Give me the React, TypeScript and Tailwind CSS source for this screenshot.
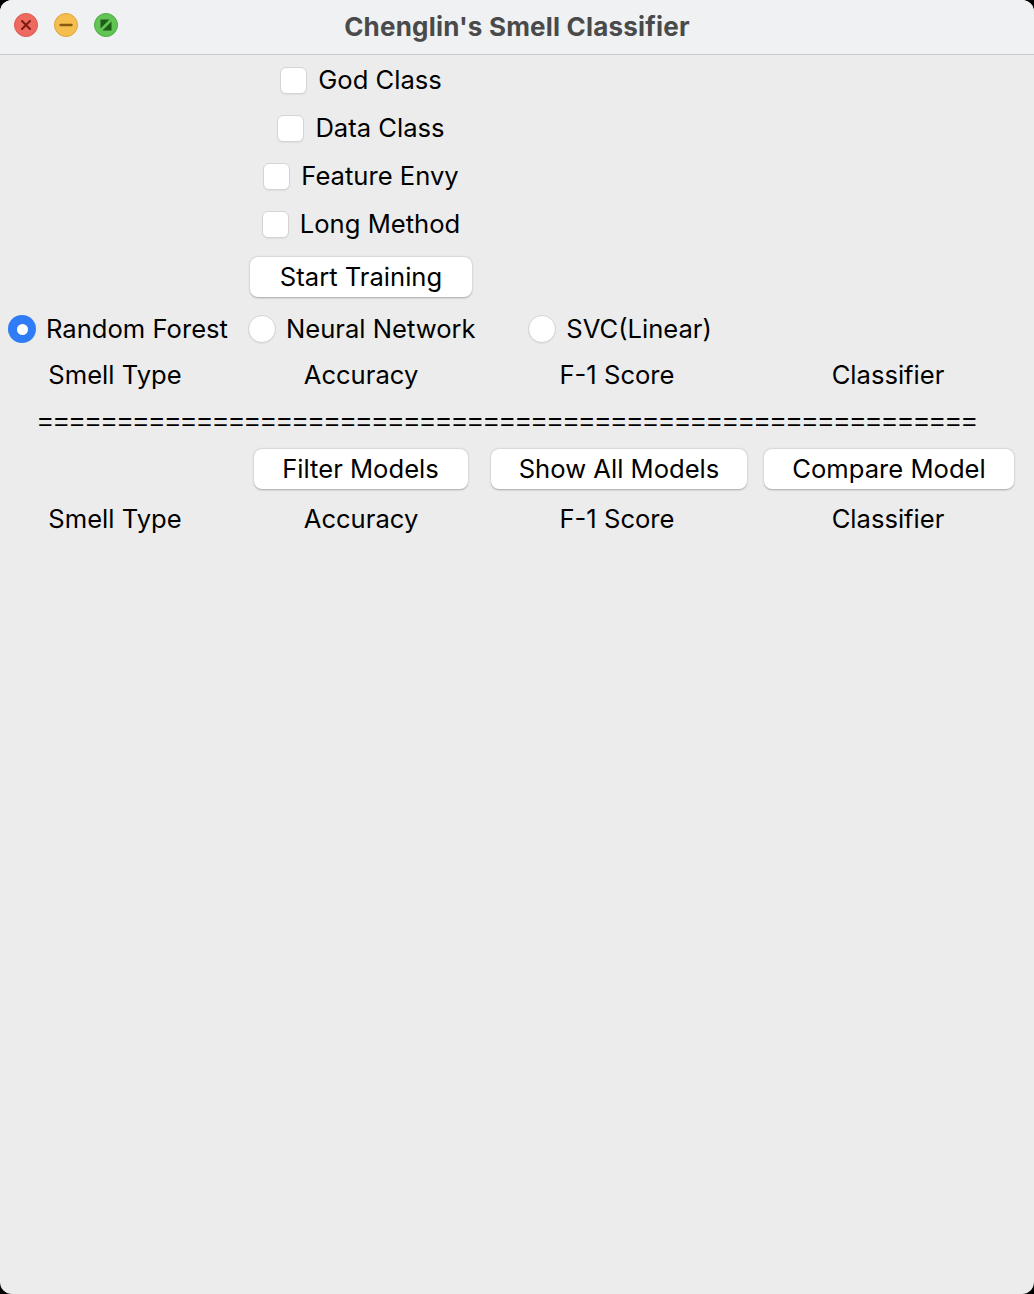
import { useState } from 'react'

const font = { fontFamily: 'Inter, "Liberation Sans", sans-serif' }

function Checkbox({ label }: { label: string }) {
    const [checked, setChecked] = useState(false)
    return (
        <label className="flex items-center gap-[11px] cursor-default select-none">
            <span
                onClick={() => setChecked(!checked)}
                className={`w-[27px] h-[27px] rounded-[6px] border border-[#d4d4d4] shadow-[0_1px_1px_rgba(0,0,0,0.06)] ${checked ? 'bg-[#2f7cf6]' : 'bg-white'}`}
            />
            <span className="text-[25.6px] text-black leading-none">{label}</span>
        </label>
    )
}

function Radio({ label, selected, onSelect }: { label: string; selected: boolean; onSelect: () => void }) {
    return (
        <div className="flex items-center gap-[10px] cursor-default select-none" onClick={onSelect}>
            {selected ? (
                <span className="w-[28px] h-[28px] rounded-full bg-[#2f7cf6] flex items-center justify-center">
                    <span className="w-[11px] h-[11px] rounded-full bg-white" />
                </span>
            ) : (
                <span className="w-[28px] h-[28px] rounded-full bg-white border border-[#d4d4d4] shadow-[0_1px_1px_rgba(0,0,0,0.06)]" />
            )}
            <span className="text-[25.6px] text-black leading-none">{label}</span>
        </div>
    )
}

function Button({ label, width }: { label: string; width: string }) {
    return (
        <button
            className={`${width} h-[40px] rounded-[8px] bg-white text-[25.6px] text-black leading-none shadow-[0_0.5px_2px_rgba(0,0,0,0.3)]`}
        >
            {label}
        </button>
    )
}

function HeaderRow() {
    return (
        <>
            <div className="justify-self-center text-[25.6px] leading-none -ml-[6px]">Smell Type</div>
            <div className="justify-self-center text-[25.6px] leading-none">Accuracy</div>
            <div className="justify-self-center text-[25.6px] leading-none">F-1 Score</div>
            <div className="justify-self-center text-[25.6px] leading-none">Classifier</div>
        </>
    )
}

export default function App() {
    const [model, setModel] = useState('rf')

    return (
        <div className="w-[1034px] h-[1294px] bg-black" style={font}>
            <div className="w-full h-full rounded-[12px] overflow-hidden bg-[#ececec] flex flex-col">
                {/* title bar */}
                <div className="h-[55px] shrink-0 bg-[#eff1f3] border-b border-[#cbcbcb] relative flex items-center justify-center">
                    <div className="absolute left-[14px] top-[13px] flex gap-[16px]">
                        <span className="w-[24px] h-[24px] rounded-full bg-[#ee6a5f] border border-[#d95a4f] flex items-center justify-center">
                            <svg width="12" height="12" viewBox="0 0 12 12">
                                <path d="M2 2 L10 10 M10 2 L2 10" stroke="#7d1a12" strokeWidth="2" strokeLinecap="round" />
                            </svg>
                        </span>
                        <span className="w-[24px] h-[24px] rounded-full bg-[#f5bf4f] border border-[#dca43c] flex items-center justify-center">
                            <svg width="14" height="12" viewBox="0 0 14 12">
                                <path d="M1.5 6 L12.5 6" stroke="#8a5a10" strokeWidth="2.4" strokeLinecap="round" />
                            </svg>
                        </span>
                        <span className="w-[24px] h-[24px] rounded-full bg-[#61c454] border border-[#4eaa41] flex items-center justify-center">
                            <svg width="12" height="12" viewBox="0 0 12 12">
                                <path d="M0.5 0.5 L9.5 0.5 L0.5 9.5 Z" fill="#1f5c17" />
                                <path d="M11.5 11.5 L2.5 11.5 L11.5 2.5 Z" fill="#1f5c17" />
                            </svg>
                        </span>
                    </div>
                    <span className="text-[26px] font-bold text-[#4a4a4a] tracking-[0.2px] -mt-[1px]">Chenglin's Smell Classifier</span>
                </div>

                {/* body */}
                <div className="grid grid-cols-[236px_250px_262px_280px] pt-[1px] text-black items-center">
                    <div className="h-[48px]" />
                    <div className="h-[48px] justify-self-center flex items-center"><Checkbox label="God Class" /></div>
                    <div />
                    <div />

                    <div className="h-[48px]" />
                    <div className="h-[48px] justify-self-center flex items-center"><Checkbox label="Data Class" /></div>
                    <div />
                    <div />

                    <div className="h-[48px]" />
                    <div className="h-[48px] justify-self-center flex items-center"><Checkbox label="Feature Envy" /></div>
                    <div />
                    <div />

                    <div className="h-[48px]" />
                    <div className="h-[48px] justify-self-center flex items-center"><Checkbox label="Long Method" /></div>
                    <div />
                    <div />

                    <div className="h-[58px]" />
                    <div className="justify-self-center"><Button label="Start Training" width="w-[222px]" /></div>
                    <div />
                    <div />

                    <div className="h-[46px] flex items-center pl-[8px]">
                        <Radio label="Random Forest" selected={model === 'rf'} onSelect={() => setModel('rf')} />
                    </div>
                    <div className="flex items-center pl-[12px]">
                        <Radio label="Neural Network" selected={model === 'nn'} onSelect={() => setModel('nn')} />
                    </div>
                    <div className="justify-self-center ml-[6px]">
                        <Radio label="SVC(Linear)" selected={model === 'svc'} onSelect={() => setModel('svc')} />
                    </div>
                    <div />

                    <div className="h-[46px] col-span-4 grid grid-cols-subgrid items-center">
                        <HeaderRow />
                    </div>

                    <div
                        className="h-[46px] col-span-4 flex items-center pl-[38px] text-[25px] leading-none tracking-[1.33px] whitespace-nowrap"
                        style={{ fontFamily: '"Liberation Sans", Arial, sans-serif' }}
                    >
                        {'='.repeat(59)}
                    </div>

                    <div className="h-[50px]" />
                    <div className="justify-self-center ml-[-1px]"><Button label="Filter Models" width="w-[214px]" /></div>
                    <div className="justify-self-center ml-[4px]"><Button label="Show All Models" width="w-[256px]" /></div>
                    <div className="justify-self-start ml-[16px]"><Button label="Compare Model" width="w-[250px]" /></div>

                    <div className="h-[50px] col-span-4 grid grid-cols-subgrid items-center">
                        <HeaderRow />
                    </div>
                </div>
            </div>
        </div>
    )
}
